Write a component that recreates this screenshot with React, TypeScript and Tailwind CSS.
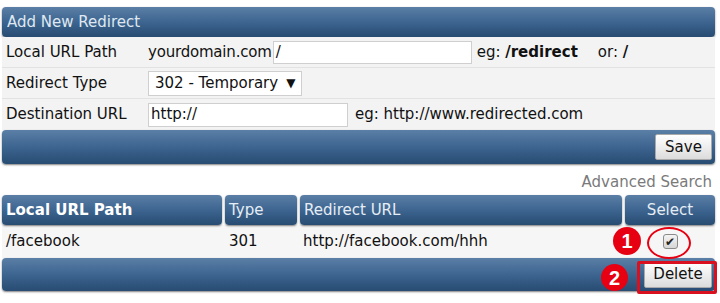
import React from "react";

const bar = "bg-gradient-to-b from-[#5b7fa6] via-[#3d6590] to-[#284c72] rounded-[4px] shadow-[0_1px_2px_rgba(0,0,0,0.5)]";
const btn = "bg-gradient-to-b from-[#ffffff] to-[#dcdcdc] border border-[#a9a9a9] rounded-[2px] text-[#111] text-[15px] leading-none flex items-center justify-center";

export default function App() {
  return (
    <div className="relative w-[720px] h-[303px] bg-white overflow-hidden text-[#111]" style={{ fontFamily: '"DejaVu Sans", Verdana, sans-serif' }}>
      <div className="ml-[2px] w-[713px] pt-[7px] text-[15px]">
        <div className={`${bar} h-[30px] flex items-center pl-[5px] text-[#dfe8f1]`}>Add New Redirect</div>
        <div className="bg-[#f3f3f3]">
          <div className="h-[31px] flex items-center border-b border-[#e2e2e2]">
            <div className="w-[146px] pl-[4px]">Local URL Path</div>
            <span className="tracking-[-0.2px]">yourdomain.com</span>
            <div className="ml-[1px] w-[199px] h-[23px] bg-white border border-[#cfcfcf] flex items-center pl-[2px]">/</div>
            <span className="ml-[5px]">eg: <b>/redirect</b></span>
            <span className="ml-[20px]">or: <b>/</b></span>
          </div>
          <div className="h-[31px] flex items-center border-b border-[#e2e2e2]">
            <div className="w-[146px] pl-[4px]">Redirect Type</div>
            <div className="w-[154px] h-[25px] bg-white border border-[#cfcfcf] flex items-center pl-[6px]">302 - Temporary <span className="ml-[8px] text-[12px]">▼</span></div>
          </div>
          <div className="h-[31px] flex items-center">
            <div className="w-[146px] pl-[4px]">Destination URL</div>
            <div className="w-[200px] h-[24px] bg-white border border-[#cfcfcf] flex items-center pl-[2px]">http://</div>
            <span className="ml-[7px]">eg: http://www.redirected.com</span>
          </div>
        </div>
        <div className={`${bar} h-[34px] flex items-center justify-end pr-[3px]`}>
          <div className={`${btn} w-[57px] h-[26px]`}>Save</div>
        </div>
        <div className="h-[31px] flex items-center justify-end pr-[3px] pt-[5px] text-[#7a7a7a]">Advanced Search</div>
        <div className="flex gap-[3px] h-[30px]">
          <div className={`${bar} w-[220px] flex items-center pl-[4px] font-bold text-white`}>Local URL Path</div>
          <div className={`${bar} w-[72px] flex items-center pl-[4px] text-[#e6edf4]`}>Type</div>
          <div className={`${bar} w-[322px] flex items-center pl-[4px] text-[#e6edf4]`}>Redirect URL</div>
          <div className={`${bar} flex-1 flex items-center justify-center text-[#e6edf4]`}>Select</div>
        </div>
        <div className="h-[33px] flex items-center bg-[#f6f6f6]">
          <div className="w-[223px] pl-[4px]">/facebook</div>
          <div className="w-[75px] pl-[4px]">301</div>
          <div className="w-[325px] pl-[3px]">http://facebook.com/hhh</div>
          <div className="flex-1 flex justify-center">
            <div className="w-[15px] h-[15px] rounded-[3px] border border-[#8a8a8a] bg-gradient-to-b from-[#f4f4f4] to-[#d6d6d6] flex items-center justify-center text-[12px] leading-none text-[#222]">✔</div>
          </div>
        </div>
        <div className={`${bar} h-[33px] flex items-center justify-end pr-[3px]`}>
          <div className={`${btn} w-[68px] h-[26px]`}>Delete</div>
        </div>
      </div>
      {/* annotations */}
      <div className="absolute left-[613px] top-[227px] w-[28px] h-[28px] rounded-full bg-[#e60012] text-white font-bold text-[20px] flex items-center justify-center" style={{ fontFamily: '"Liberation Sans", Arial, sans-serif' }}>1</div>
      <div className="absolute left-[647px] top-[227px] w-[44px] h-[32px] rounded-[50%] border-2 border-[#e60012]"></div>
      <div className="absolute left-[601px] top-[264px] w-[27px] h-[27px] rounded-full bg-[#e60012] text-white font-bold text-[20px] flex items-center justify-center" style={{ fontFamily: '"Liberation Sans", Arial, sans-serif' }}>2</div>
      <div className="absolute left-[637px] top-[261px] w-[80px] h-[33px] rounded-[2px] border-[3px] border-[#d8101f]"></div>
    </div>
  );
}
